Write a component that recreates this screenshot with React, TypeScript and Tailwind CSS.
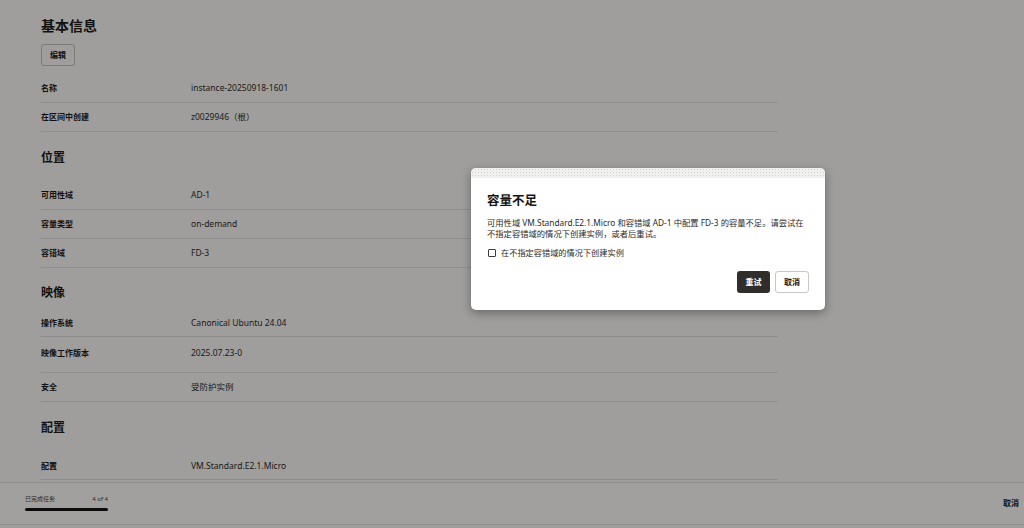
import React from "react";

const FONT = "font-['Noto_Sans','Noto_Sans_CJK_SC',sans-serif]";

type Row = { label: string; value: string; h?: string; top?: boolean };

function DetailRow({ label, value, h = "h-[29px]", top }: Row) {
  return (
    <div
      className={`flex border-b border-[#8f8e8c] ${h} ${top ? "items-start pt-[10px]" : "items-center"}`}
    >
      <span className="w-[150px] shrink-0 text-[8px] font-bold leading-[12px] text-[#121110]">{label}</span>
      <span className="text-[8.5px] leading-[12px] text-[#191817]">{value}</span>
    </div>
  );
}

function SectionTitle({ children, h, pt }: { children: React.ReactNode; h: string; pt: string }) {
  return (
    <div className={`flex items-center ${h} ${pt}`}>
      <h2 className="text-[12px] font-bold leading-[16px] text-[#121110]">{children}</h2>
    </div>
  );
}

function CapacityDialog() {
  return (
    <div className="absolute left-[471px] top-[168px] w-[354px] overflow-hidden rounded-[5px] bg-white shadow-[0_3px_10px_rgba(0,0,0,0.35)]">
      <div className="h-[10px] bg-[#f1f1f0] bg-[radial-gradient(circle,#d2d1cf_0.7px,transparent_0.9px)] bg-[length:3px_3px]" />
      <div className="px-[16px] pb-[17px] pt-[15px]">
        <h3 className="text-[12.5px] font-bold leading-[16px] text-[#161513]">容量不足</h3>
        <p className="mt-[8px] text-[8.3px] leading-[11px] text-[#2b2a28]">
          <span className="block whitespace-nowrap">
            可用性域 VM.Standard.E2.1.Micro 和容错域 AD-1 中配置 FD-3 的容量不足。请尝试在
          </span>
          <span className="block whitespace-nowrap">不指定容错域的情况下创建实例，或者后重试。</span>
        </p>
        <label className="mt-[8.5px] flex h-[11px] items-center gap-[5px] text-[8.2px] text-[#2b2a28]">
          <span className="ml-[1px] h-[8px] w-[8px] rounded-[1px] border border-[#3c3b39] bg-white" />
          在不指定容错域的情况下创建实例
        </label>
        <div className="mt-[12px] flex justify-end gap-[5px]">
          <button className="h-[22px] w-[33px] rounded-[3px] bg-[#302d2a] text-[8px] font-bold text-white">
            重试
          </button>
          <button className="h-[22px] w-[34px] rounded-[3px] border border-[#c9c7c4] bg-white text-[8px] font-bold text-[#161513]">
            取消
          </button>
        </div>
      </div>
    </div>
  );
}

export default function App() {
  return (
    <div className={`relative flex h-[528px] w-[1024px] flex-col overflow-hidden bg-[#9f9e9c] ${FONT}`}>
      <div className="flex-1 pl-[41px] pt-[16px]">
        <div className="w-[737px]">
          <h1 className="text-[14px] font-bold leading-[20px] text-[#121110]">基本信息</h1>
          <button className="mt-[8px] h-[22px] w-[34px] rounded-[3px] border border-[#7b7a78] text-[8px] font-bold text-[#121110]">
            编辑
          </button>
          <div className="mt-[8px]">
            <DetailRow label="名称" value="instance-20250918-1601" />
            <DetailRow label="在区间中创建" value="z0029946（根）" />
          </div>

          <SectionTitle h="h-[49px]" pt="pt-[3px]">位置</SectionTitle>
          <DetailRow label="可用性域" value="AD-1" />
          <DetailRow label="容量类型" value="on-demand" />
          <DetailRow label="容错域" value="FD-3" />

          <SectionTitle h="h-[41px]" pt="pt-[9px]">映像</SectionTitle>
          <DetailRow label="操作系统" value="Canonical Ubuntu 24.04" h="h-[28px]" />
          <DetailRow label="映像工作版本" value="2025.07.23-0" h="h-[36px]" top />
          <DetailRow label="安全" value="受防护实例" />

          <SectionTitle h="h-[50px]" pt="pt-[1px]">配置</SectionTitle>
          <DetailRow label="配置" value="VM.Standard.E2.1.Micro" h="h-[28px]" />
        </div>
      </div>

      <div className="mb-[3px] flex h-[43px] shrink-0 items-start justify-between border-y border-[#8f8e8c] bg-[#a1a09e] pl-[25px] pr-[5px]">
        <div className="w-[83px] pt-[12px]">
          <div className="flex items-center justify-between text-[6px] leading-[8px] text-[#2a2927]">
            <span>已完成任务</span>
            <span>4 of 4</span>
          </div>
          <div className="mt-[5px] h-[3px] w-full rounded-full bg-[#0b0a09]" />
        </div>
        <button className="pt-[14px] text-[8px] font-bold leading-[12px] text-[#121110]">取消</button>
      </div>

      <CapacityDialog />
    </div>
  );
}
